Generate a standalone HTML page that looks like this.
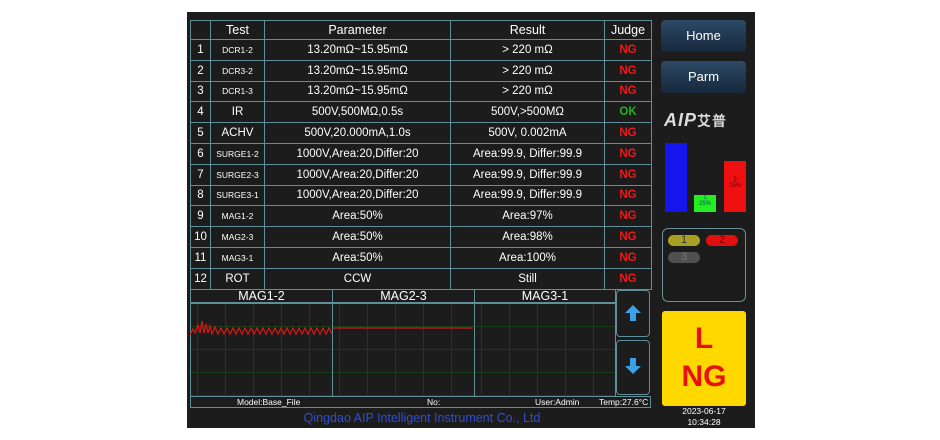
<!DOCTYPE html>
<html><head><style>
body{margin:0;width:940px;height:440px;background:#fff;position:relative;font-family:"Liberation Sans",sans-serif;overflow:hidden}
.scr{position:absolute;left:187px;top:12px;width:568px;height:416px;background:#1c1c1c}
.a{position:absolute}
table{position:absolute;left:190px;top:20px;border-collapse:collapse;color:#fff;font-size:11.5px}
td{border:1px solid #5f8f98;text-align:center;padding:0;height:19.8px}
tr:first-child td{font-size:12.5px;height:18px}
.s{font-size:8.5px}
.ng{color:#f01818;font-weight:bold}
.ok{color:#1fb41f;font-weight:bold}
.btn{position:absolute;left:661px;width:85px;height:32px;border-radius:4px;background:linear-gradient(#2d4a66,#16283c);color:#fff;font-size:13px;text-align:center;line-height:32px}
.cell{position:absolute;top:303px;height:94px;border:1px solid #5f8f98;box-sizing:border-box;background-image:linear-gradient(90deg,#183f18 1px,transparent 1px),linear-gradient(#183f18 1px,transparent 1px);background-size:28px 100%,100% 23px;background-position:6px 0,0 22px}
.hd{position:absolute;top:289px;height:14px;border:1px solid #5f8f98;box-sizing:border-box;color:#fff;font-size:12.5px;text-align:center;line-height:13px}
.pill{position:absolute;width:32px;height:11px;border-radius:6px;font-size:11px;text-align:center;line-height:11px}
</style></head><body>
<div class="scr"></div>
<table>
<tr><td style="width:19px"></td><td style="width:53px">Test</td><td style="width:185px">Parameter</td><td style="width:153px">Result</td><td style="width:46px">Judge</td></tr>
<tr><td>1</td><td class="s">DCR1-2</td><td>13.20mΩ~15.95mΩ</td><td>&gt; 220 mΩ</td><td class="ng">NG</td></tr>
<tr><td>2</td><td class="s">DCR3-2</td><td>13.20mΩ~15.95mΩ</td><td>&gt; 220 mΩ</td><td class="ng">NG</td></tr>
<tr><td>3</td><td class="s">DCR1-3</td><td>13.20mΩ~15.95mΩ</td><td>&gt; 220 mΩ</td><td class="ng">NG</td></tr>
<tr><td>4</td><td>IR</td><td>500V,500MΩ,0.5s</td><td>500V,&gt;500MΩ</td><td class="ok">OK</td></tr>
<tr><td>5</td><td>ACHV</td><td>500V,20.000mA,1.0s</td><td>500V, 0.002mA</td><td class="ng">NG</td></tr>
<tr><td>6</td><td class="s">SURGE1-2</td><td>1000V,Area:20,Differ:20</td><td>Area:99.9, Differ:99.9</td><td class="ng">NG</td></tr>
<tr><td>7</td><td class="s">SURGE2-3</td><td>1000V,Area:20,Differ:20</td><td>Area:99.9, Differ:99.9</td><td class="ng">NG</td></tr>
<tr><td>8</td><td class="s">SURGE3-1</td><td>1000V,Area:20,Differ:20</td><td>Area:99.9, Differ:99.9</td><td class="ng">NG</td></tr>
<tr><td>9</td><td class="s">MAG1-2</td><td>Area:50%</td><td>Area:97%</td><td class="ng">NG</td></tr>
<tr><td>10</td><td class="s">MAG2-3</td><td>Area:50%</td><td>Area:98%</td><td class="ng">NG</td></tr>
<tr><td>11</td><td class="s">MAG3-1</td><td>Area:50%</td><td>Area:100%</td><td class="ng">NG</td></tr>
<tr><td>12</td><td>ROT</td><td>CCW</td><td>Still</td><td class="ng">NG</td></tr>
</table>
<div class="hd" style="left:190px;width:143px">MAG1-2</div>
<div class="hd" style="left:332px;width:143px">MAG2-3</div>
<div class="hd" style="left:474px;width:142px">MAG3-1</div>
<div class="cell" style="left:190px;width:143px"></div>
<div class="cell" style="left:332px;width:143px"></div>
<div class="cell" style="left:474px;width:142px"></div>
<svg class="a" style="left:190px;top:315px" width="285" height="30"><polyline fill="none" stroke="#d01818" stroke-width="1.3" points="0,20 3,14 5,18 8,10 10,18 12,6 14,18 16,9 18,18 20,11 22,19 25,12 28,19 31,13 34,19 37,13 40,19 43,13 46,19 49,13 52,19 55,13 58,19 61,13 64,19 67,13 70,19 73,13 76,19 79,13 82,19 85,13 88,19 91,13 94,19 97,13 100,19 103,13 106,19 109,13 112,19 115,13 118,19 121,13 124,19 127,13 130,19 133,13 136,19 139,13 142,19"/><line x1="143" y1="13" x2="283" y2="13" stroke="#d01818" stroke-width="1.2"/></svg>
<div class="a" style="left:616px;top:290px;width:34px;height:47px;border:1px solid #5f8f98;border-radius:4px;box-sizing:border-box"></div>
<div class="a" style="left:616px;top:340px;width:34px;height:55px;border:1px solid #5f8f98;border-radius:4px;box-sizing:border-box"></div>
<svg class="a" style="left:624px;top:304px" width="18" height="18"><path d="M9 1L17 9H12V17H6V9H1Z" fill="#3aa0e8"/></svg>
<svg class="a" style="left:624px;top:357px" width="18" height="18"><path d="M9 17L17 9H12V1H6V9H1Z" fill="#3aa0e8"/></svg>
<div class="a" style="left:190px;top:396px;width:461px;height:12px;border:1px solid #5f8f98;box-sizing:border-box;color:#fff;font-size:8.5px;line-height:11px">
<span class="a" style="left:46px">Model:Base_File</span><span class="a" style="left:236px">No:</span><span class="a" style="left:344px">User:Admin</span><span class="a" style="left:408px">Temp:27.6°C</span></div>
<div class="a" style="left:187px;top:411px;width:470px;text-align:center;color:#2f4fd0;font-size:12.5px">Qingdao AIP Intelligent Instrument Co., Ltd</div>
<div class="btn" style="top:20px">Home</div>
<div class="btn" style="top:61px">Parm</div>
<div class="a" style="left:664px;top:110px;color:#ddd;font-weight:bold;font-style:italic;font-size:18px;letter-spacing:1px">AIP<span style="font-family:'Noto Sans CJK SC';font-style:normal;font-size:14px">艾普</span></div>
<div class="a" style="left:665px;top:143px;width:22px;height:69px;background:#1515ee"></div>
<div class="a" style="left:694px;top:195px;width:22px;height:17px;background:#22ee22;font-size:6px;text-align:center;color:#055">1<br>25%</div>
<div class="a" style="left:724px;top:161px;width:22px;height:51px;background:#ee1010;font-size:6px;text-align:center;color:#600;padding-top:16px;box-sizing:border-box">3<br>25%</div>
<div class="a" style="left:662px;top:228px;width:84px;height:74px;border:1px solid #6b8f98;border-radius:6px;box-sizing:border-box"></div>
<div class="pill" style="left:668px;top:235px;background:#a8a020;color:#333">1</div>
<div class="pill" style="left:706px;top:235px;background:#e01010;color:#700">2</div>
<div class="pill" style="left:668px;top:252px;background:#505050;color:#777">3</div>
<div class="a" style="left:662px;top:311px;width:84px;height:95px;background:#ffd800;border-radius:3px;color:#e81010;font-weight:bold;font-size:30px;text-align:center;line-height:38px;padding-top:9px;box-sizing:border-box">L<br>NG</div>
<div class="a" style="left:662px;top:406px;width:84px;text-align:center;color:#fff;font-size:8.5px;line-height:11px">2023-06-17<br>10:34:28</div>
</body></html>
